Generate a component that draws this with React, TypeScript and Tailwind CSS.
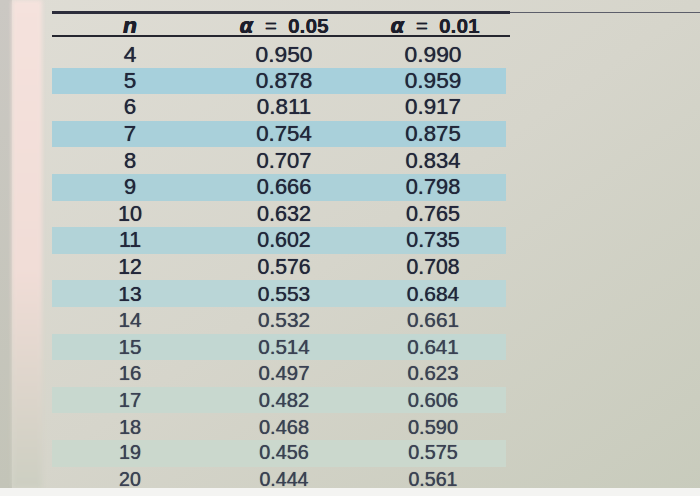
const rows: [number, string, string][] = [
  [4, "0.950", "0.990"],
  [5, "0.878", "0.959"],
  [6, "0.811", "0.917"],
  [7, "0.754", "0.875"],
  [8, "0.707", "0.834"],
  [9, "0.666", "0.798"],
  [10, "0.632", "0.765"],
  [11, "0.602", "0.735"],
  [12, "0.576", "0.708"],
  [13, "0.553", "0.684"],
  [14, "0.532", "0.661"],
  [15, "0.514", "0.641"],
  [16, "0.497", "0.623"],
  [17, "0.482", "0.606"],
  [18, "0.468", "0.590"],
  [19, "0.456", "0.575"],
  [20, "0.444", "0.561"],
];

const stripes = [
  "",
  "bg-[#a7d0dc]",
  "",
  "bg-[#a9d0da]",
  "",
  "bg-[#acd1d9]",
  "",
  "bg-[#b2d3d8]",
  "",
  "bg-[#bad6d7]",
  "",
  "bg-[#c2d7d2]",
  "",
  "bg-[#c8d8cf]",
  "",
  "bg-[#cbd8cd]",
  "",
];

function Alpha({ value }: { value: string }) {
  return (
    <span className="font-bold">
      <span className="font-['DejaVu_Sans',sans-serif] italic">α</span>
      <span className="mx-[11px] font-normal">=</span>
      {value}
    </span>
  );
}

export default function App() {
  return (
    <div className="h-[496px] w-[700px] overflow-hidden bg-gradient-to-br from-[#dfddd5] via-[#d6d5cb] to-[#c8cbbc] font-['Liberation_Sans',Arial,sans-serif]">
      <div className="flex h-[488px] overflow-hidden">
        {/* screen bezel / glare on the left */}
        <div className="flex w-[52px] shrink-0">
          <div className="w-[12px] bg-gradient-to-b from-[#cbc8c3] to-[#c3c4b8]" />
          <div className="w-[30px] bg-gradient-to-b from-[#f5e2dd] via-[#f1ddd7] via-55% to-[#cdcfc2] blur-[2px]" />
          <div className="w-[10px]" />
        </div>

        <div className="flex flex-1 flex-col">
          {/* top rule */}
          <div className="mt-[11px] flex shrink-0 items-center">
            <div className="h-[3px] w-[458px] bg-[#2c2d3b]" />
            <div className="h-px flex-1 bg-[#5c5e6a]" />
          </div>

          {/* header */}
          <div className="flex h-[20px] w-[458px] shrink-0 items-end text-[21px] leading-[16px] text-[#1c1e2b] [text-shadow:0_0_0.6px_currentColor]">
            <div className="w-[156px] text-center font-['DejaVu_Sans',sans-serif] font-bold italic">n</div>
            <div className="w-[152px] text-center">
              <Alpha value="0.05" />
            </div>
            <div className="w-[150px] text-center">
              <Alpha value="0.01" />
            </div>
          </div>
          <div className="mt-[1px] h-[2px] w-[458px] shrink-0 bg-[#25262f]" />

          {/* body */}
          <div className="mt-[4px] flex shrink-0 flex-col">
            {rows.map(([n, a, b], i) => (
              <div
                key={n}
                className={`flex h-[26.6px] w-[454px] shrink-0 items-center leading-none [text-shadow:0_0_0.7px_currentColor] ${stripes[i]} ${
                  i < 10 ? "text-[#22263a]" : "text-[#3a4153]"
                }`}
                style={{ fontSize: `${22.8 - i * 0.2}px` }}
              >
                <div className="w-[156px] text-center">{n}</div>
                <div className="w-[152px] text-center">{a}</div>
                <div className="w-[146px] text-center">{b}</div>
              </div>
            ))}
          </div>
        </div>
      </div>
      <div className="h-[8px] bg-[#f4f4f2]" />
    </div>
  );
}
